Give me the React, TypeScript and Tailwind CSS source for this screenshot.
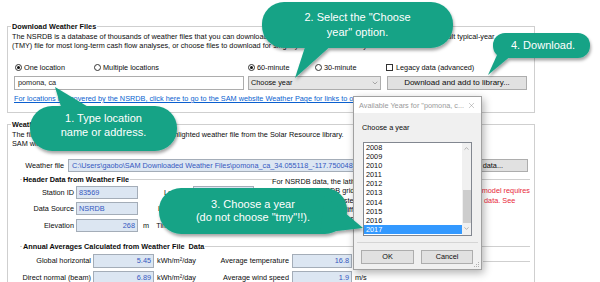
import React from 'react';
import { ChevronDown, ChevronUp, X } from 'lucide-react';

function Radio({ checked }: { checked?: boolean }) {
  return (
    <span className="inline-flex w-[7px] h-[7px] shrink-0 rounded-full border border-[#333] bg-white items-center justify-center">
      {checked && <span className="w-[3px] h-[3px] rounded-full bg-[#111]" />}
    </span>
  );
}

const inputCls =
  'h-[13px] border border-[#a4adb8] bg-[#dce6f2] text-[#3558c0] leading-[11px] px-[2px] whitespace-nowrap overflow-hidden';

export default function App() {
  const years = ['2008', '2009', '2010', '2011', '2012', '2013', '2014', '2015', '2016', '2017'];
  return (
    <div className="relative w-[600px] h-[282px] overflow-hidden bg-white text-[7.3px] leading-[9px] text-[#0c0c0c] font-['Liberation_Sans',Arial,sans-serif]">
      {/* Download Weather Files group */}
      <fieldset className="ml-[7px] mt-[22px] w-[528px] h-[91px] border border-[#cfcfcf] pl-[4px] pr-[6px]">
        <legend className="font-bold px-[1px] -ml-[1px] leading-[9px]">Download Weather Files</legend>
        <p className="mt-[1px] whitespace-nowrap">
          The NSRDB is a database of thousands of weather files that you can download and add to your solar resource library. Choose the default typical-year
          <br />
          (TMY) file for most long-term cash flow analyses, or choose files to download for single-year or P50/P90 analyses.
        </p>
        <div className="mt-[12px] h-[10px] flex items-center">
          <div className="w-[82px] pl-[3px] flex items-center">
            <Radio checked />
            <span className="ml-[2px]">One location</span>
          </div>
          <div className="w-[154px] flex items-center">
            <Radio />
            <span className="ml-[2px]">Multiple locations</span>
          </div>
          <div className="w-[67px] flex items-center">
            <Radio checked />
            <span className="ml-[2px]">60-minute</span>
          </div>
          <div className="w-[71px] flex items-center">
            <Radio />
            <span className="ml-[2px]">30-minute</span>
          </div>
          <div className="flex items-center">
            <span className="w-[7px] h-[7px] border border-[#333] bg-white" />
            <span className="ml-[3px]">Legacy data (advanced)</span>
          </div>
        </div>
        <div className="mt-[4px] h-[14px] flex">
          <div className="ml-[2px] w-[230px] h-[14px] border border-[#adadad] bg-white pl-[3px] leading-[12px] text-[#222]">pomona, ca</div>
          <div className="ml-[4px] w-[133px] h-[14px] border border-[#adadad] bg-[#e5e5e5] pl-[2px] leading-[12px] flex items-center justify-between">
            <span>Choose year</span>
            <ChevronDown size={8} strokeWidth={1.2} className="mr-[1px] text-[#444]" />
          </div>
          <div className="ml-[6px] w-[140px] h-[14px] border border-[#adadad] bg-[#e1e1e1] text-center leading-[12px] text-[8px]">
            Download and add to library...
          </div>
        </div>
        <p className="mt-[4px] pl-[2px] whitespace-nowrap text-[#0a5fcf] underline">
          For locations not covered by the NSRDB, click here to go to the SAM website Weather Page for links to other data sources.
        </p>
      </fieldset>

      {/* Weather file group */}
      <fieldset className="ml-[7px] mt-[7px] w-[528px] h-[200px] border border-[#cfcfcf] pl-[4px]">
        <legend className="font-bold px-[1px] -ml-[1px] leading-[9px]">Weather File</legend>
        <p className="mt-[1px] whitespace-nowrap">
          The file that SAM will use for simulations is the highlighted weather file from the Solar Resource library.
          <br />
          SAM will use this file for simulations.
        </p>
        <div className="mt-[11px] h-[13px] flex">
          <div className="w-[52px] text-right leading-[13px]">Weather file</div>
          <div className={`ml-[4px] w-[368px] ${inputCls} pl-[3px]`}>
            C:\Users\gaobo\SAM Downloaded Weather Files\pomona_ca_34.055118_-117.750048_psm3_60_2017.csv
          </div>
          <div className="ml-[4px] w-[88px] h-[13px] border border-[#adadad] bg-[#e1e1e1] text-center leading-[11px]">View data...</div>
        </div>

        <fieldset className="mt-[3px] ml-[8px] w-[510px] h-[67px] border-0 border-t border-[#cfcfcf] pl-[2px]">
          <legend className="font-bold px-[1px] leading-[9px]">Header Data from Weather File</legend>
          <div className="flex">
            <div className="mt-[1.5px] w-[240px] flex flex-col gap-[3.5px]">
              {[
                ['Station ID', '83569', '', 'Latitude', 'left'],
                ['Data Source', 'NSRDB', '', 'Longitude', 'left'],
                ['Elevation', '268', 'm', 'Time zone', 'right'],
              ].map(([l, v, u, l2, al]) => (
                <div key={l} className="h-[13px] flex">
                  <div className="w-[52px] text-right leading-[13px]">{l}</div>
                  <div className={`ml-[2px] w-[62px] ${inputCls} ${al === 'right' ? 'text-right' : ''}`}>{v}</div>
                  <div className="w-[14px] pl-[5px] leading-[13px]">{u}</div>
                  <div className="w-[38px] text-right leading-[13px]">{l2}</div>
                  <div className={`ml-[3px] w-[61px] ${inputCls}`}></div>
                </div>
              ))}
            </div>
            <div className="ml-[10px] -mt-[7px] w-[258px] whitespace-nowrap leading-[9.3px]">
              <span className="bg-white">For NSRDB data, the latitude and longitude are for the</span>
              <br />
              center of the NSRDB grid cell in an area nearest <span className="text-[#e8283a]">the detailed PV model requires</span>
              <br />
              the location you requested in the search. The <span className="text-[#e8283a]">hourly or subhourly data. See</span>
              <br />
              These values may be different from those of the
              <br />
              location name or address you typed for the
              <br />
              requested location.
            </div>
          </div>
        </fieldset>

        <fieldset className="ml-[8px] w-[510px] border-0 border-t border-[#cfcfcf] pl-[2px]">
          <legend className="font-bold px-[1px] leading-[9px]">Annual Averages Calculated from Weather File&nbsp; Data</legend>
          <div className="mt-[2.5px] flex flex-col gap-[3px]">
            {[
              ['Global horizontal', '5.45', 'kWh/m²/day', 'Average temperature', '16.8', '°C'],
              ['Direct normal (beam)', '6.89', 'kWh/m²/day', 'Average wind speed', '1.9', 'm/s'],
            ].map(([l, v, u, l2, v2, u2], i) => (
              <div key={l} className="h-[14px] flex">
                <div className="w-[69px] text-right leading-[14px]">{l}</div>
                <div className={`ml-[2px] w-[61px] h-[14px] ${inputCls} text-right leading-[12px]`}>{v}</div>
                <div className="ml-[3px] w-[62px] leading-[14px]">{u}</div>
                <div className="w-[70px] text-right leading-[14px]">{l2}</div>
                <div className={`ml-[3px] w-[60px] h-[14px] ${inputCls} text-right leading-[12px]`}>{v2}</div>
                <div className="ml-[3px] leading-[14px]">{u2}</div>
                {i === 0 && <div className="ml-auto mt-[7px] w-[47px] h-0 border-t border-[#cfcfcf]" />}
              </div>
            ))}
          </div>
        </fieldset>
      </fieldset>

      {/* Dialog */}
      <div className="absolute left-[353px] top-[96px] w-[129px] h-[174px] border border-[#a0a0a0] bg-[#f0f0f0] shadow-[2px_3px_8px_rgba(0,0,0,0.3)] flex flex-col">
        <div className="h-[16px] bg-white flex items-center justify-between pl-[5px] pr-[5px] text-[#9a9a9a]">
          <span className="whitespace-nowrap">Available Years for "pomona, c...</span>
          <X size={9} strokeWidth={1} className="text-[#777]" />
        </div>
        <div className="mt-[10px] pl-[8px]">Choose a year</div>
        <div className="mt-[9.5px] ml-[9px] w-[109px] h-[94px] border border-[#828790] bg-white flex">
          <div className="flex-1 flex flex-col">
            {years.map((y) => (
              <div
                key={y}
                className={`h-[9.2px] leading-[9.2px] pl-[2px] ${y === '2017' ? 'bg-[#3399ff] text-white' : ''}`}
              >
                {y}
              </div>
            ))}
          </div>
          <div className="w-[9px] bg-[#f0f0f0] flex flex-col items-center">
            <ChevronUp size={7} strokeWidth={1.5} className="mt-[2px] text-[#606060]" />
            <div className="mt-[38px] w-[8px] h-[33px] bg-[#cdcdcd]" />
            <ChevronDown size={7} strokeWidth={1.5} className="mt-[2px] text-[#606060]" />
          </div>
        </div>
        <div className="mt-[6px] mx-[3px] h-[1px] bg-[#d5d5d5]" />
        <div className="mt-[7px] flex">
          <div className="ml-[7px] w-[53px] h-[14px] border border-[#adadad] bg-[#e1e1e1] text-center leading-[12px]">OK</div>
          <div className="ml-[7px] w-[52px] h-[14px] border border-[#adadad] bg-[#e1e1e1] text-center leading-[12px]">Cancel</div>
        </div>
        <svg className="absolute right-[1px] bottom-[1px]" width="6" height="6" viewBox="0 0 6 6">
          <rect x="4" y="0" width="1" height="1" fill="#b0b0b0" />
          <rect x="2" y="2" width="1" height="1" fill="#b0b0b0" />
          <rect x="4" y="2" width="1" height="1" fill="#b0b0b0" />
          <rect x="0" y="4" width="1" height="1" fill="#b0b0b0" />
          <rect x="2" y="4" width="1" height="1" fill="#b0b0b0" />
          <rect x="4" y="4" width="1" height="1" fill="#b0b0b0" />
        </svg>
      </div>

      {/* Callout shapes */}
      <svg className="absolute left-0 top-0 pointer-events-none" width="600" height="282" viewBox="0 0 600 282">
        <defs>
          <filter id="sh" x="-10%" y="-10%" width="130%" height="140%">
            <feDropShadow dx="1" dy="2.5" stdDeviation="1.8" floodColor="#000" floodOpacity="0.35" />
          </filter>
        </defs>
        <g fill="#15a386" filter="url(#sh)">
          <rect x="262" y="2" width="191" height="46" rx="22" />
          <polygon points="306,44 333,44 295,78" />
        </g>
        <g fill="#15a386" filter="url(#sh)">
          <rect x="493" y="33" width="97" height="25" rx="12" />
          <polygon points="497,55 512,55 488,75" />
        </g>
        <g fill="#15a386" filter="url(#sh)">
          <rect x="30" y="106" width="147" height="45" rx="22" />
          <polygon points="62,110 90,108 55,87" />
        </g>
        <g fill="#15a386" filter="url(#sh)">
          <rect x="159" y="188" width="188" height="46" rx="22" />
          <polygon points="325,196 320,233 363,228" />
        </g>
      </svg>
      <div className="absolute left-[262px] top-[10px] w-[191px] text-center text-white text-[11px] leading-[15px]">
        2. Select the "Choose
        <br />
        year" option.
      </div>
      <div className="absolute left-[493px] top-[38px] w-[100px] text-center text-white text-[11px] leading-[14px]">4. Download.</div>
      <div className="absolute left-[30px] top-[111px] w-[147px] text-center text-white text-[11px] leading-[14px]">
        1. Type location
        <br />
        name or address.
      </div>
      <div className="absolute left-[159px] top-[198px] w-[188px] text-center text-white text-[11px] leading-[13px]">
        3. Choose a year
        <br />
        (do not choose "tmy"!!).
      </div>
    </div>
  );
}
